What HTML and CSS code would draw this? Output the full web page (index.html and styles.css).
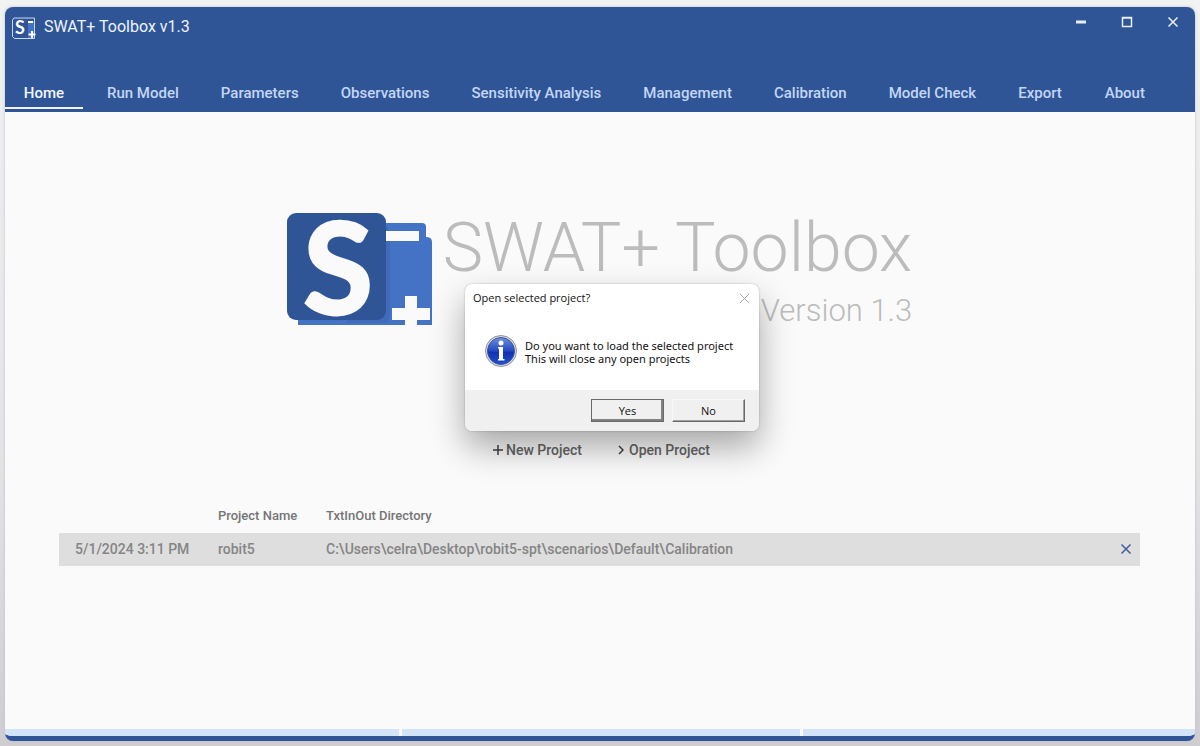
FILE: index.html
```html
<!DOCTYPE html>
<html lang="en">
<head>
<meta charset="utf-8">
<title>SWAT+ Toolbox v1.3</title>
<link rel="stylesheet" href="styles.css">
</head>
<body>
<div class="window">
  <header class="header">
    <div class="titlebar">
      <svg class="app-icon" viewBox="0 0 26 23" aria-hidden="true">
        <path d="M3 1h20.500v20.500H3.500l-2-2V3z" fill="#2f5597" stroke="#c9d9f2"/>
        <path d="M17 4h6v17h-6z" fill="#4472c4"/>
        <path d="M17 5h5M21 14v7M17.500 17.500h7" stroke="#fff" stroke-width="2" fill="none"/>
        <text x="4" y="17" class="icon-letter">S</text>
      </svg>
      <span class="title">SWAT+ Toolbox v1.3</span>
      <div class="controls">
        <button class="control" aria-label="Minimize"><svg viewBox="0 0 12 12"><path d="M1 6h10" stroke-width="3"/></svg></button>
        <button class="control" aria-label="Maximize"><svg viewBox="0 0 12 12"><path d="M1.500 1.500h9v9h-9zM1 2h10"/></svg></button>
        <button class="control" aria-label="Close"><svg viewBox="0 0 12 12"><path d="M1.500 1.500l9 9M10.500 1.500l-9 9" stroke-width="1.500"/></svg></button>
      </div>
    </div>
    <nav class="tabs">
      <a class="tab active" href="#home">Home</a>
      <a class="tab" href="#run">Run Model</a>
      <a class="tab" href="#parameters">Parameters</a>
      <a class="tab" href="#observations">Observations</a>
      <a class="tab" href="#sensitivity">Sensitivity Analysis</a>
      <a class="tab" href="#management">Management</a>
      <a class="tab" href="#calibration">Calibration</a>
      <a class="tab" href="#check">Model Check</a>
      <a class="tab" href="#export">Export</a>
      <a class="tab" href="#about">About</a>
    </nav>
  </header>
  <main class="content">
    <section class="hero">
      <svg class="logo" viewBox="0 0 146 113" aria-hidden="true">
        <path d="M12 10h123q4 0 4 4v10q6 0 6 5v83H11V100z" fill="#4472c4"/>
        <path d="M98 18h34v10H98z" fill="#fafafa"/>
        <path d="M97 12q6 2 6 12v78q0 7-7 8H60V12z" fill="#3c68b3" opacity=".6"/>
        <path d="M98 18h34v10H98z" fill="#fafafa"/>
        <rect width="99" height="107" rx="9" fill="#2f5597"/>
        <path d="M118 83h12v12h13v12h-13v6h-12v-6h-13V95h13z" fill="#fafafa"/>
        <text x="51" y="101" text-anchor="middle" class="logo-letter">S</text>
      </svg>
      <div class="brand">
        <h1 class="name">SWAT+ Toolbox</h1>
        <p class="version">Version 1.3</p>
      </div>
    </section>
    <div class="actions">
      <button class="action"><svg viewBox="0 0 10 10"><path d="M5 0v10M0 5h10"/></svg>New Project</button>
      <button class="action"><svg class="chevron" viewBox="0 0 6 10"><path d="M1 1l4 4-4 4"/></svg>Open Project</button>
    </div>
    <table class="projects">
      <thead>
        <tr><th class="date"></th><th class="project">Project Name</th><th>TxtInOut Directory</th><th class="remove-cell"></th></tr>
      </thead>
      <tbody>
        <tr><td>5/1/2024 3:11 PM</td><td>robit5</td><td>C:\Users\celra\Desktop\robit5-spt\scenarios\Default\Calibration</td><td><button class="remove" aria-label="Remove robit5"><svg viewBox="0 0 12 12"><path d="M1.500 1.500l9 9M10.500 1.500l-9 9"/></svg></button></td></tr>
      </tbody>
    </table>
  </main>
  <footer class="status"><span></span><span></span><span></span></footer>

  <dialog class="dialog" open aria-labelledby="dialog-title">
    <div class="dialog-head">
      <h2 class="dialog-title" id="dialog-title">Open selected project?</h2>
      <button class="dialog-close" aria-label="Close"><svg viewBox="0 0 12 12"><path d="M1 1l10 10M11 1L1 11"/></svg></button>
    </div>
    <div class="dialog-body">
      <svg class="info" viewBox="0 0 32 32" aria-hidden="true">
        <defs><linearGradient id="blue" x2="0" y2="1"><stop offset="0" stop-color="#6f8fdc"/><stop offset=".5" stop-color="#2348be"/><stop offset=".55" stop-color="#1231b0"/><stop offset="1" stop-color="#2450cf"/></linearGradient></defs>
        <circle cx="16" cy="16" r="15.500" fill="#d8dce2" stroke="#8d949f"/>
        <circle cx="16" cy="16" r="13.500" fill="url(#blue)" stroke="#3b539c"/>
        <circle cx="16" cy="8" r="2.500" fill="#fff"/>
        <path d="M13 12h5v12h1.500v1.500h-6.500v-1.500h1v-10.500h-1z" fill="#fff"/>
      </svg>
      <p class="message">Do you want to load the selected project<br>This will close any open projects</p>
    </div>
    <div class="dialog-foot">
      <button class="choice default">Yes</button>
      <button class="choice">No</button>
    </div>
  </dialog>
</div>
</body>
</html>
```
FILE: styles.css
```css
* { box-sizing: border-box; }
body {
  margin: 0;
  padding: 7px 5px 5px;
  min-height: 100vh;
  display: flex;
  font-family: Roboto, sans-serif;
  background: linear-gradient(#f1f2f2, #e4e4e5 60%, #d0cdd1);
}
button { font: inherit; color: inherit; background: none; border: 0; padding: 0; }
svg { display: block; fill: none; stroke-linecap: butt; }
h1, h2, p { margin: 0; font-weight: 400; }

.window {
  position: relative;
  flex: 1;
  display: flex;
  flex-direction: column;
  background: #fafafa;
  border-bottom: 5px solid #2f5597;
  border-radius: 8px;
  overflow: hidden;
  box-shadow: 0 0 3px #b8c2d2;
}
.header { padding-bottom: 3px; background: #2f5597; color: #fff; }
.titlebar { display: flex; align-items: flex-start; height: 68px; padding: 0 16px 0 6px; }
.app-icon { width: 26px; height: 23px; margin-top: 10px; }
.icon-letter { font: 700 18px Lato, sans-serif; fill: #fff; }
.title { flex: 1; margin: 10px 0 0 7px; font-size: 16px; line-height: 20px; color: #eef4fd; }
.controls { display: flex; gap: 34px; margin-top: 9px; }
.control svg { width: 12px; height: 12px; stroke: #e8f1ff; stroke-width: 1.500; }
.tabs { display: flex; gap: 6px; }
.tab {
  min-width: 78px;
  height: 34px;
  padding: 0 18px;
  border-bottom: 2px solid transparent;
  font-size: 15px;
  line-height: 36px;
  font-weight: 500;
  text-align: center;
  white-space: nowrap;
  text-decoration: none;
  color: #c3d6f5;
}
.tab.active { color: #f2f7ff; border-color: #f3f3ee; }

.content { flex: 1; padding: 101px 55px 0 54px; }
.hero { display: flex; justify-content: center; gap: 10px; }
.logo { flex: none; width: 146px; height: 113px; overflow: visible; }
.logo-letter { font: 700 127px Lato, sans-serif; fill: #fafafa; stroke: #fafafa; stroke-width: 3; }
.brand { color: #bcbcbc; text-align: right; }
.name { font-size: 68px; line-height: 70px; font-weight: 300; white-space: nowrap; }
.version { margin-top: 10px; font-size: 31px; line-height: 36px; font-weight: 300; }
.actions { display: flex; justify-content: center; gap: 36px; margin-top: 111px; padding-left: 4px; }
.action { display: flex; align-items: center; gap: 3px; font-size: 14px; line-height: 20px; font-weight: 500; color: #656565; }
.action svg { width: 10px; height: 10px; stroke: #404040; stroke-width: 1.500; }
.action .chevron { width: 6px; margin-right: 2px; }
.projects { width: 100%; margin-top: 40px; border-collapse: collapse; table-layout: fixed; text-align: left; color: #858585; }
.projects th { height: 33px; padding: 0 0 2px; font-size: 13px; font-weight: 500; color: #757575; }
.projects td { height: 33px; padding: 0 0 2px; font-size: 14px; font-weight: 500; background: #dedede; }
.projects td:first-child { padding-left: 16px; }
.projects .date { width: 159px; }
.projects .project { width: 108px; }
.projects .remove-cell { width: 20px; }
.remove { display: block; }
.remove svg { width: 12px; height: 12px; stroke: #3f5f9b; stroke-width: 1.500; }
.status { display: grid; grid-template-columns: 394fr 398fr 392fr; gap: 3px; height: 7px; }
.status span { background: #d3e3f8; }

.dialog {
  position: absolute;
  top: 277px;
  left: calc(50% - 135px);
  width: 294px;
  margin: 0;
  padding: 0;
  border: 0;
  border-radius: 7px;
  background: #fff;
  color: #111;
  font-family: "Open Sans", sans-serif;
  font-size: 11px;
  box-shadow: 0 0 2px #0004, 0 16px 34px #0005;
}
.dialog-head { display: flex; justify-content: space-between; padding: 5px 9px 0 8px; }
.dialog-title { font-size: 11px; line-height: 18px; }
.dialog-close svg { width: 11px; height: 11px; stroke: #a0a0a0; }
.dialog-body { display: flex; gap: 8px; padding: 28px 20px 23px; }
.info { flex: none; width: 32px; height: 32px; }
.message { padding-top: 4px; font-family: "Noto Sans", sans-serif; font-size: 11px; line-height: 13px; white-space: nowrap; }
.dialog-foot { display: flex; justify-content: flex-end; gap: 8px; padding: 9px 14px; background: #f0f0f0; border-radius: 0 0 7px 7px; }
.choice { width: 73px; height: 23px; border: 1px solid; border-color: #f8f8f8 #696969 #696969 #f8f8f8; box-shadow: inset -1px -1px #a0a0a0; }
.choice.default { border-color: #696969; box-shadow: inset -2px -2px #808080; }
```
